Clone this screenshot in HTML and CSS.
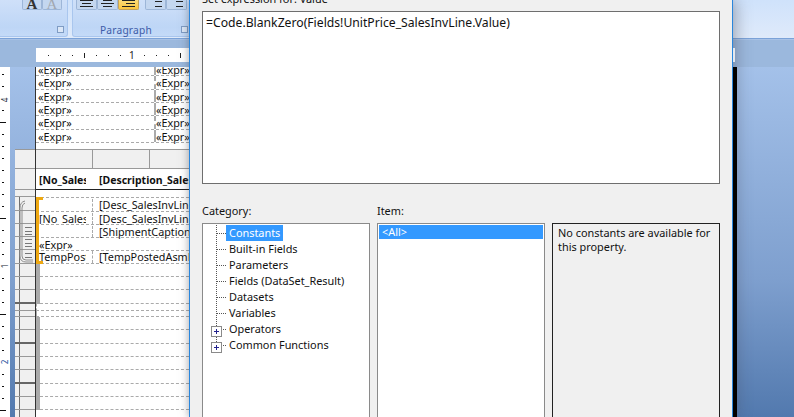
FILE: index.html
```html
<!DOCTYPE html>
<html lang="en">
<head>
<meta charset="utf-8">
<title>Set expression</title>
<link rel="stylesheet" href="styles.css">
</head>
<body>
<div class="app">
  <header class="ribbon">
    <div class="group group-font">
      <div class="tools">
        <span class="tool tool-a">A</span>
        <span class="tool tool-a faded">A</span>
      </div>
      <span class="launcher"></span>
    </div>
    <div class="group group-para">
      <div class="tools">
        <span class="tool tool-align"><i></i><i class="mid"></i><i></i></span>
        <span class="tool tool-align"><i class="mid"></i><i></i><i class="mid"></i></span>
        <span class="tool tool-align on"><i></i><i class="right"></i><i></i></span>
        <span class="tool tool-list"><i></i><i></i></span>
        <span class="tool tool-list"><i></i><i></i></span>
      </div>
      <div class="group-title">Paragraph</div>
      <span class="launcher"></span>
    </div>
  </header>
  <div class="ruler-band">
    <div class="ruler-top">
      <b></b><b></b><b></b><b class="big"></b><b></b><b></b><b></b><span class="num">1</span><b></b><b></b><b></b><b class="big"></b>
    </div>
  </div>
  <div class="work">
    <div class="ruler-side">
      <span class="digit d-a">4</span>
      <span class="digit d-b">1</span>
      <span class="digit d-c">2</span>
    </div>
    <div class="handles">
      <div class="h-top"></div>
      <div class="h r20 head"></div>
      <div class="h r21 plain"></div>
      <div class="h r7 plain"></div>
      <div class="h r14"></div><div class="h r13"></div><div class="h r13"></div><div class="h r13"></div><div class="h r14"></div>
      <div class="h r13"></div><div class="h r13"></div><div class="h r14 thick"></div><div class="h r7"></div><div class="h r6"></div>
      <div class="h r13"></div><div class="h r14 thick"></div><div class="h r13"></div><div class="h r13"></div><div class="h r14 thick"></div>
      <div class="h r13"></div><div class="h r13"></div><div class="h r13"></div>
      <svg class="group-icon" width="15" height="64" viewBox="0 0 15 64">
        <path d="M6 1 Q1 2 1 8 V56 Q1 62 7 62 H14 M6 3 Q3 4 3 8 V56 Q3 60 7 60 H14" fill="none" stroke="#8c8c8c"/>
        <path d="M6 27.500h7M6 31.500h7M6 34.500h7M6 39.500h7M6 43.500h7M6 46.500h7M6 53.500h7M6 57.500h7" stroke="#777" fill="none"/>
      </svg>
    </div>
    <div class="canvas">
      <div class="expr-group">
        <div class="expr-row"><span class="c1">«Expr»</span><span class="c2">«Expr»</span></div>
        <div class="expr-row"><span class="c1">«Expr»</span><span class="c2">«Expr»</span></div>
        <div class="expr-row"><span class="c1">«Expr»</span><span class="c2">«Expr»</span></div>
        <div class="expr-row"><span class="c1">«Expr»</span><span class="c2">«Expr»</span></div>
        <div class="expr-row"><span class="c1">«Expr»</span><span class="c2">«Expr»</span></div>
        <div class="expr-row"><span class="c1">«Expr»</span><span class="c2">«Expr»</span></div>
      </div>
      <div class="head-band"><span></span><span></span></div>
      <div class="bold-row"><span class="c1">[No_Sales</span><span class="c2">[Description_Sales</span></div>
      <div class="data">
        <span class="bracket"></span>
        <div class="d-row r14"><span class="c1"></span><span class="c2">[Desc_SalesInvLine</span></div>
        <div class="d-row r13"><span class="c1">[No_Sales</span><span class="c2">[Desc_SalesInvLine</span></div>
        <div class="d-row r13"><span class="c1"></span><span class="c2">[ShipmentCaption</span></div>
        <div class="d-row r13"><span class="c1">«Expr»</span><span class="c2 none"></span></div>
        <div class="d-row r14 last"><span class="c1">TempPostedAsm</span><span class="c2">[TempPostedAsmLine</span></div>
      </div>
      <div class="lines">
        <div class="r13"></div><div class="r13"></div><div class="r14"></div><div class="r7 gap"></div><div class="r6 gap"></div>
        <div class="r13"></div><div class="r14"></div><div class="r13"></div><div class="r13"></div><div class="r14"></div>
        <div class="r13"></div><div class="r13"></div>
      </div>
    </div>
  </div>
</div>

<section class="dialog">
  <div class="set-label">Set expression for: Value</div>
  <div class="expr-box">=Code.BlankZero(Fields!UnitPrice_SalesInvLine.Value)</div>
  <div class="pickers">
    <div class="col">
      <div class="col-label">Category:</div>
      <div class="box tree">
        <ul>
          <li><span class="sel">Constants</span></li>
          <li><span>Built-in Fields</span></li>
          <li><span>Parameters</span></li>
          <li><span>Fields (DataSet_Result)</span></li>
          <li><span>Datasets</span></li>
          <li><span>Variables</span></li>
          <li class="plus"><span>Operators</span></li>
          <li class="plus"><span>Common Functions</span></li>
        </ul>
      </div>
    </div>
    <div class="col">
      <div class="col-label">Item:</div>
      <div class="box items"><div class="item-sel">&lt;All&gt;</div></div>
    </div>
    <div class="col">
      <div class="col-label">&nbsp;</div>
      <div class="box note">No constants are available for this property.</div>
    </div>
  </div>
</section>
<div class="edge-bar"></div>
<div class="edge-ruler"></div>
</body>
</html>
```
FILE: styles.css
```css
* { box-sizing: border-box; }
html, body { margin: 0; padding: 0; }
body {
  width: 794px; height: 417px; overflow: hidden; position: relative;
  font-family: "Noto Sans", "Open Sans", sans-serif; color: #111;
  background: #9bb8dd;
}
.app { width: 794px; height: 417px; overflow: hidden; display: flex; flex-direction: column; background: linear-gradient(#a5c2ea 60px, #7e9fce 280px, #5279ae 417px); }

/* ribbon */
.ribbon { height: 39px; flex: none; display: flex; gap: 4px; background: linear-gradient(#cfe2fb, #dfeafa); border-bottom: 1px solid #7ba2d8; width: 794px; }
.group { position: relative; height: 37px; background: linear-gradient(#cfe0f9, #bed6f6 75%, #c4daf8); border: 1px solid #a9c6ee; border-top: 0; border-radius: 0 0 3px 3px; }
.group-font { width: 70px; margin-left: -2px; }
.group-para { width: 120px; }
.tools { display: flex; }
.tool { display: block; height: 10px; background: #c4d7f0; border: 1px solid #9db6d8; border-top: 0; border-radius: 0 0 2px 2px; }
.group-font .tools { padding-left: 23px; }
.tool-a { width: 20px; font: bold 15px/8px "Liberation Serif", serif; text-align: center; color: #333; overflow: hidden; }
.tool-a.faded { color: #a2a8b0; font-weight: normal; }
.group-para .tools { padding-left: 3px; }
.tool-align { width: 21px; padding: 0 3px; }
.tool-align i { display: block; height: 1px; margin-top: 2px; background: #222; }
.tool-align i:first-child { margin-top: 0; }
.tool-align i.mid { margin-left: 2px; margin-right: 2px; }
.tool-align i.right { margin-left: 4px; }
.tool-align.on { background: linear-gradient(#fbdb7a, #fcc53f); border-color: #c5a25a; }
.tool-list { width: 21px; padding: 1px 3px 0 9px; }
.tool-list:nth-child(4) { margin-left: 6px; }
.tool-list i { display: block; height: 1px; margin-bottom: 4px; background: #222; }
.group-title { position: absolute; left: 27px; top: 22px; font-size: 10.2px; line-height: 16px; color: #3e5ca8; letter-spacing: .2px; }
.launcher { position: absolute; right: 3px; bottom: 3px; width: 7px; height: 7px; border: 1px solid #7f9cc4; background: #dbe7f7; }

/* top ruler */
.ruler-band { height: 28px; flex: none; background: #9bb8dd; padding: 8px 0 0 36px; border-top: 1px solid #a8c2e6; }
.ruler-top { width: 153px; height: 14px; background: #fff; display: flex; align-items: center; padding-left: 12px; gap: 11px; }
.ruler-top b { width: 1px; height: 1px; background: #222; flex: none; }
.ruler-top b.big { height: 5px; }
.ruler-top .num { font-size: 10px; line-height: 12px; width: 1px; color: #222; text-indent: -3px; flex: none; }

/* work area */
.work { flex: 1; display: flex; min-height: 0; }
.ruler-side {
  width: 10px; flex: none; position: relative; background-color: #fff;
  background-image: linear-gradient(#111 1px, transparent 1px), linear-gradient(#111 1px, transparent 1px);
  background-size: 6px 96px, 2px 12px;
  background-position: 0 55px, 2px 7px;
  background-repeat: repeat-y;
}
.digit { position: absolute; left: 1px; width: 7px; font-size: 8px; line-height: 8px; text-align: center; background: #fff; color: #123; transform: rotate(-90deg); }
.d-a { top: 29px; }
.d-b { top: 195px; }
.d-c { top: 291px; color: #1c4e9a; }
.handles { width: 21px; flex: none; margin-left: 5px; position: relative; border-right: 1px solid #333; overflow: hidden; }
.h-top { height: 82px; }
.h { background: #f0f0f0; border-bottom: 1px solid #999; box-shadow: inset 4px 0 0 #f0f0f0, inset 5px 0 0 #707070; }
.h.thick { border-bottom: 2px solid #666; }
.h.head { border-top: 1px solid #999; box-shadow: none; }
.h.plain { box-shadow: none; }
.group-icon { position: absolute; left: 4px; top: 133px; }
.r20 { height: 20px; }
.r21 { height: 21px; }
.r7 { height: 7px; }
.r6 { height: 6px; }
.r13 { height: 13px; }
.r14 { height: 14px; }

.canvas { width: 153px; flex: none; background: #fff; overflow: hidden; position: relative; font-size: 10.8px; }
.expr-group { height: 82px; overflow: hidden; position: relative; }
.expr-row { height: 13.33px; display: flex; border-bottom: 1px dashed #aaa; line-height: 13px; position: relative; top: -4px; }
.expr-row .c1 { width: 120px; flex: none; padding-left: 2px; border-right: 2px dashed #aaa; }
.expr-row .c2 { padding-left: 0; white-space: nowrap; }
.head-band { height: 20px; background: #f0f0f0; display: flex; border-top: 1px solid #999; border-bottom: 1px solid #999; }
.head-band span { border-right: 1px solid #999; width: 57px; }
.bold-row { height: 28px; padding-bottom: 7px; display: flex; align-items: center; font-weight: bold; font-size: 10.5px; position: relative; }
.bold-row::after { content: ""; position: absolute; left: 0; right: 0; top: 20px; height: 1px; background: #222; }
.bold-row .c1, .d-row .c1 { width: 50px; flex: none; margin-right: 6px; padding-left: 3px; white-space: nowrap; overflow: hidden; }
.bold-row .c2, .d-row .c2 { flex: none; padding-left: 6px; white-space: nowrap; }
.bold-row .c2 { padding-left: 7px; }
.data { position: relative; }
.bracket { position: absolute; left: 0; top: 0; width: 7px; height: 67px; border: solid #eea811; border-width: 3px 0 3px 3px; z-index: 1; }
.d-row { display: flex; line-height: 12px; padding-top: 1px; border-top: 1px dashed #aaa; }
.d-row.last { padding-top: 0; align-items: center; border-bottom: 1px dashed #aaa; }
.d-row .c2 { border-left: 1px dashed #aaa; }
.d-row .c2.none { border-left: 0; }
.lines { border-left: 4px solid #aaa; }
.lines div { border-bottom: 1px dashed #aaa; }
.lines .gap { border-left: 1px dashed #aaa; margin-left: -4px; background: #fff; }

/* dialog */
.dialog { position: absolute; left: 189px; top: 0; width: 544px; height: 417px; background: #f0f0f0; border: solid #2a86dc; border-width: 0 1px; padding: 0 12px; box-shadow: 4px 0 14px rgba(70,70,80,.35), -2px 0 5px rgba(70,70,80,.2); font-size: 10.9px; }
.set-label { height: 11px; margin-top: -8px; margin-bottom: 8px; line-height: 14px; white-space: nowrap; }
.expr-box { height: 173px; width: 518px; background: #fff; border: 1px solid #6e6e6e; padding: 3px 3px; font-size: 12.2px; line-height: 16px; }
.pickers { display: flex; gap: 7px; margin-top: 20px; }
.col { width: 168px; }
.col-label { line-height: 14px; height: 19px; }
.box { height: 194px; background: #fff; border: 1px solid #8a8a8a; border-bottom: 0; }
.tree { padding: 1px 0 0 13px; }
.tree ul { list-style: none; margin: 0; padding: 0; border-left: 1px dotted #555; height: 117px; }
.tree li { height: 16px; line-height: 16px; position: relative; display: flex; align-items: center; }
.tree li::before { content: ""; width: 9px; border-top: 1px dotted #555; flex: none; }
.tree li span { padding: 0 3px; }
.tree .sel { background: #3399ff; color: #fff; }
.tree .plus::after {
  content: ""; position: absolute; left: -6px; top: 5px; width: 9px; height: 9px; border: 1px solid #8a8a8a;
  background: linear-gradient(#23238e, #23238e) center / 5px 1px no-repeat, linear-gradient(#23238e, #23238e) center / 1px 5px no-repeat, #fff;
}
.items { padding: 1px; }
.item-sel { height: 14px; background: #3399ff; color: #fff; line-height: 14px; padding-left: 3px; }
.note { background: #f0f0f0; border-color: #222; padding: 2px 5px; line-height: 14px; }
.edge-bar { position: absolute; left: 733px; top: 67px; width: 4px; height: 350px; background: #000; }
.edge-ruler { position: absolute; left: 733px; top: 48px; width: 2px; height: 14px; background: #e4e8ee; }
```
